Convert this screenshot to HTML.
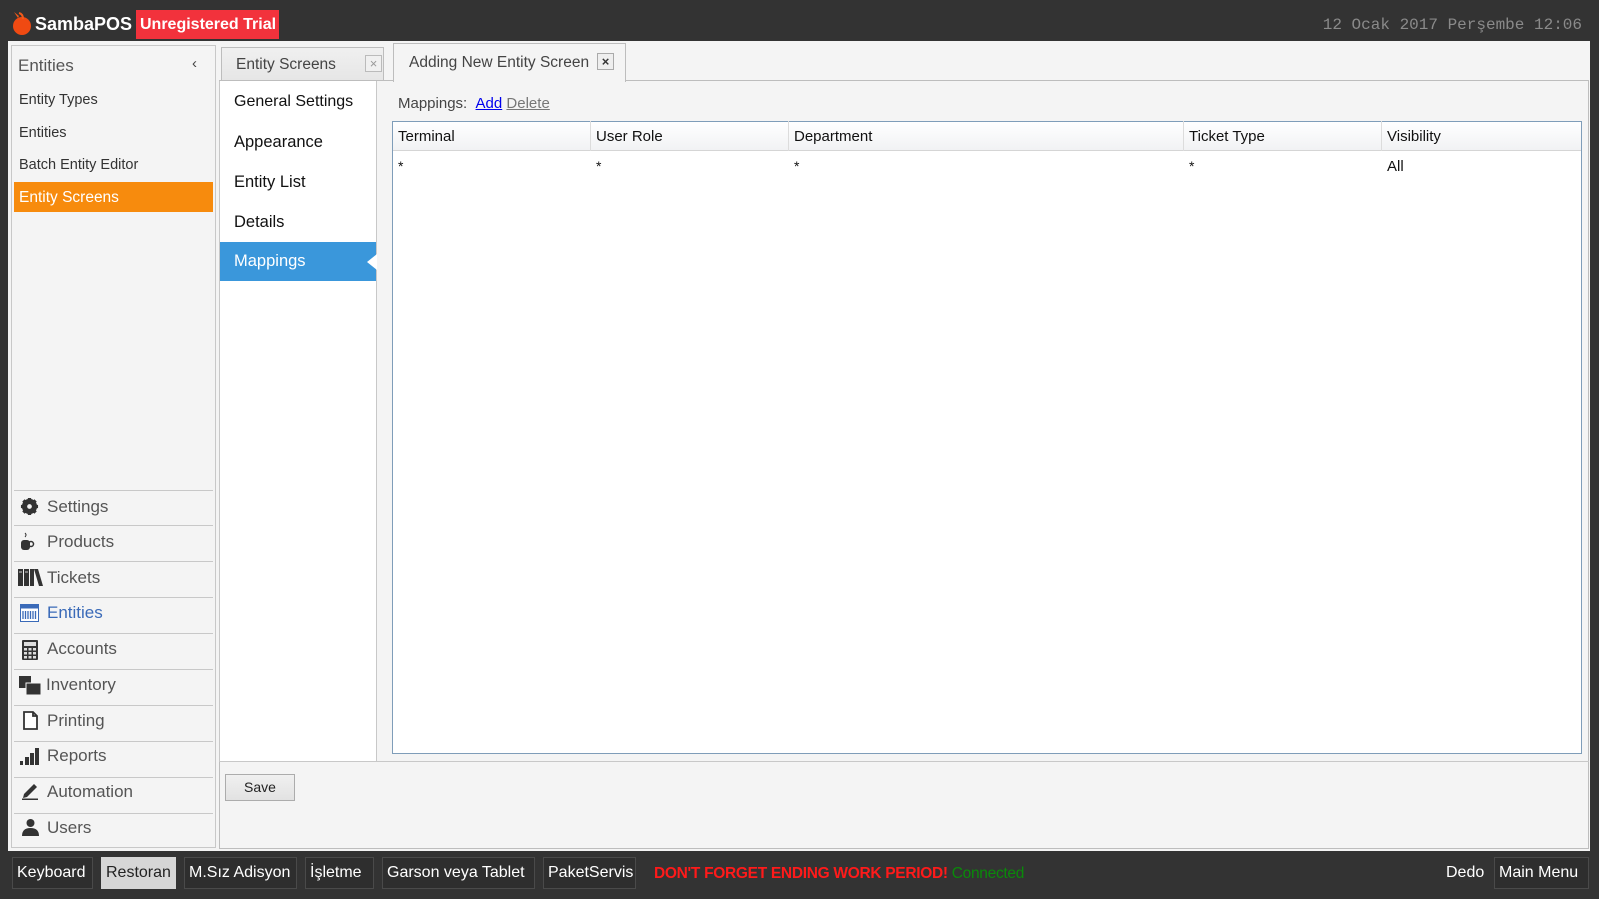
<!DOCTYPE html>
<html><head><meta charset="utf-8"><style>
*{box-sizing:border-box;margin:0;padding:0}
body{width:1599px;height:899px;background:#333333;font-family:"Liberation Sans",sans-serif;position:relative;overflow:hidden}
.a{position:absolute;white-space:nowrap}
.side{font-size:14.5px;color:#333}
.nav{font-size:17px;color:#555;left:47px}
.navsep{position:absolute;left:14px;width:199px;height:1px;background:#c8c8c8}
.ic{position:absolute;left:20px}
.mi{font-size:16.5px;color:#111;left:234px}
.bb{position:absolute;top:857px;height:32px;border:1px solid #4a4a4a;color:#fff;font-size:16px;line-height:30px;padding:0 4px;white-space:nowrap;background:#2e2e2e}
.col{position:absolute;top:121px;width:1px;height:30px;background:#dcdcdc}
.h{font-size:15px;color:#111;top:128px}
.c{font-size:14px;color:#111;top:158px}
</style></head><body>
<svg class="a" style="left:10px;top:10px" width="24" height="26" viewBox="0 0 24 26"><path d="M4 2 L9 6 L8 8 Z" fill="#f25a1a"/><ellipse cx="12" cy="16" rx="9" ry="9" fill="#f04a12"/><path d="M9 3 q4 1 4 6" stroke="#f25a1a" stroke-width="2" fill="none"/></svg>
<div class="a" style="left:35px;top:14px;font-size:18px;font-weight:bold;color:#fff">SambaPOS</div>
<div class="a" style="left:136px;top:10px;height:29px;width:143px;background:#f2323c;color:#fff;font-weight:bold;font-size:16px;line-height:29px;padding-left:4px">Unregistered Trial</div>
<div class="a" style="right:17px;top:16px;font-family:'Liberation Mono',monospace;font-size:16px;color:#8a8a8a">12 Ocak 2017 Perşembe 12:06</div>
<div class="a" style="left:8px;top:41px;width:1582px;height:810px;background:#f4f4f4"></div>
<div class="a" style="left:11px;top:45px;width:205px;height:803px;border:1px solid #c8c8c8;background:#f4f4f4"></div>
<div class="a side" style="left:18px;top:56px;font-size:17px;color:#555">Entities</div>
<div class="a" style="left:192px;top:55px;font-size:15px;color:#444">‹</div>
<div class="a side" style="left:19px;top:92px">Entity Types</div>
<div class="a side" style="left:19px;top:125px">Entities</div>
<div class="a side" style="left:19px;top:157px">Batch Entity Editor</div>
<div class="a" style="left:14px;top:182px;width:199px;height:30px;background:#f78b0d"></div>
<div class="a side" style="left:19px;top:189px;color:#fff;font-size:15.5px">Entity Screens</div>
<div class="navsep" style="top:490px"></div><div class="navsep" style="top:525px"></div><div class="navsep" style="top:561px"></div><div class="navsep" style="top:597px"></div><div class="navsep" style="top:633px"></div><div class="navsep" style="top:669px"></div><div class="navsep" style="top:705px"></div><div class="navsep" style="top:741px"></div><div class="navsep" style="top:777px"></div><div class="navsep" style="top:813px"></div>
<svg class="ic" style="top:497px" width="19" height="19" viewBox="0 0 20 20"><circle cx="10" cy="10" r="6" fill="none" stroke="#333" stroke-width="4"/><g stroke="#333" stroke-width="3.5"><path d="M10 1v18M1 10h18M3.6 3.6l12.8 12.8M16.4 3.6L3.6 16.4"/></g><circle cx="10" cy="10" r="2.5" fill="#f4f4f4"/></svg>
<div class="a nav" style="top:497px">Settings</div>
<svg class="ic" style="top:532px" width="16" height="20" viewBox="0 0 16 20"><path d="M5 1q2 2 0 4" stroke="#333" fill="none"/><rect x="1" y="8" width="9" height="10" rx="3" fill="#333"/><circle cx="11" cy="12" r="2.5" fill="none" stroke="#333" stroke-width="1.5"/></svg>
<div class="a nav" style="top:532px">Products</div>
<svg class="a" style="left:17px;top:568px" width="26" height="19" viewBox="0 0 26 19"><rect x="1" y="1" width="5" height="17" fill="#333"/><rect x="7" y="1" width="5" height="17" fill="#333"/><rect x="13" y="1" width="4" height="17" fill="#333"/><path d="M17 1l4 0 5 17-4 0z" fill="#333"/><path d="M2 4h3M8 4h3" stroke="#ccc"/></svg>
<div class="a nav" style="top:568px">Tickets</div>
<svg class="ic" style="top:604px" width="19" height="18" viewBox="0 0 19 18"><rect x="0.5" y="0.5" width="18" height="17" fill="#fff" stroke="#3a6ab8"/><rect x="0.5" y="0.5" width="18" height="4" fill="#3a6ab8"/><path d="M3 7v8M5.5 7v8M8 7v8M10.5 7v8M13 7v8M15.5 7v8" stroke="#3a6ab8" stroke-width="1.3"/></svg>
<div class="a nav" style="top:603px;color:#3a6ab8">Entities</div>
<svg class="ic" style="top:640px;left:22px" width="16" height="20" viewBox="0 0 16 20"><rect width="16" height="20" rx="1" fill="#333"/><rect x="2" y="2" width="12" height="4" fill="#ddd"/><g fill="#ddd"><rect x="2" y="8" width="3" height="2.5"/><rect x="6.5" y="8" width="3" height="2.5"/><rect x="11" y="8" width="3" height="2.5"/><rect x="2" y="12" width="3" height="2.5"/><rect x="6.5" y="12" width="3" height="2.5"/><rect x="11" y="12" width="3" height="2.5"/><rect x="2" y="16" width="3" height="2.5"/><rect x="6.5" y="16" width="3" height="2.5"/><rect x="11" y="16" width="3" height="2.5"/></g></svg>
<div class="a nav" style="top:639px">Accounts</div>
<svg class="ic" style="top:676px;left:19px" width="22" height="19" viewBox="0 0 22 19"><rect width="12" height="12" fill="#333"/><rect x="7" y="7" width="15" height="12" fill="#333" stroke="#f4f4f4"/></svg>
<div class="a nav" style="top:675px;left:46px">Inventory</div>
<svg class="ic" style="top:711px;left:23px" width="15" height="19" viewBox="0 0 15 19"><path d="M1 1h9l4 4v13H1z" fill="#fff" stroke="#333" stroke-width="1.8"/><path d="M10 1v4h4" fill="none" stroke="#333" stroke-width="1.8"/></svg>
<div class="a nav" style="top:711px">Printing</div>
<svg class="ic" style="top:748px" width="20" height="17" viewBox="0 0 20 17"><rect x="0" y="13" width="3" height="4" fill="#333"/><rect x="5" y="9" width="4" height="8" fill="#333"/><rect x="10" y="5" width="4" height="12" fill="#333"/><rect x="15" y="0" width="4" height="17" fill="#333"/></svg>
<div class="a nav" style="top:746px">Reports</div>
<svg class="ic" style="top:782px;left:21px" width="18" height="18" viewBox="0 0 18 18"><path d="M3 12L13 2l3 3L6 15l-4 1z" fill="#333"/><rect x="1" y="16.5" width="16" height="1.5" fill="#333"/></svg>
<div class="a nav" style="top:782px">Automation</div>
<svg class="ic" style="top:818px;left:22px" width="17" height="18" viewBox="0 0 17 18"><circle cx="8.5" cy="5" r="4" fill="#333"/><path d="M0 18q0-8 8.5-8t8.5 8z" fill="#333"/></svg>
<div class="a nav" style="top:818px">Users</div>
<div class="a" style="left:221px;top:47px;width:163px;height:34px;border:1px solid #bdbdbd;background:linear-gradient(#f0f0f0,#e6e6e6)"></div>
<div class="a" style="left:236px;top:56px;font-size:15.5px;color:#444">Entity Screens</div>
<div class="a" style="left:365px;top:55px;width:17px;height:17px;border:1px solid #bbb;color:#999;font-size:13px;line-height:15px;text-align:center;background:#f0f0f0">×</div>
<div class="a" style="left:219px;top:80px;width:1370px;height:769px;border:1px solid #bdbdbd;background:#f4f4f4"></div>
<div class="a" style="left:393px;top:43px;width:233px;height:39px;border:1px solid #bdbdbd;border-bottom:none;background:#f4f4f4"></div>
<div class="a" style="left:409px;top:54px;font-size:15.5px;color:#444">Adding New Entity Screen</div>
<div class="a" style="left:597px;top:53px;width:17px;height:17px;border:1px solid #aaa;color:#333;font-size:13px;font-weight:bold;line-height:15px;text-align:center;background:#eee">×</div>
<div class="a" style="left:219px;top:81px;width:158px;height:681px;background:#fff;border-right:1px solid #c8c8c8;border-left:1px solid #c8c8c8"></div>
<div class="a mi" style="top:93px;font-size:16px">General Settings</div>
<div class="a mi" style="top:133px">Appearance</div>
<div class="a mi" style="top:173px">Entity List</div>
<div class="a mi" style="top:213px">Details</div>
<div class="a" style="left:220px;top:242px;width:156px;height:39px;background:#3a97db"></div>
<div class="a" style="left:367px;top:254px;width:0;height:0;border-top:8px solid transparent;border-bottom:8px solid transparent;border-right:10px solid #fff"></div>
<div class="a mi" style="top:252px;color:#fff">Mappings</div>
<div class="a" style="left:219px;top:761px;width:1370px;height:1px;background:#c8c8c8"></div>
<div class="a" style="left:225px;top:774px;width:70px;height:27px;border:1px solid #acacac;background:linear-gradient(#f0f0f0,#e2e2e2);font-size:14px;text-align:center;line-height:25px;color:#222">Save</div>
<div class="a" style="left:398px;top:95px;font-size:15px;color:#444">Mappings: &nbsp;<span style="color:#0000ee;text-decoration:underline">Add</span> <span style="color:#777;text-decoration:underline">Delete</span></div>
<div class="a" style="left:392px;top:121px;width:1190px;height:633px;border:1px solid #7f9db9;background:#fff"></div>
<div class="a" style="left:393px;top:122px;width:1188px;height:29px;background:linear-gradient(#fff,#f1f2f4);border-bottom:1px solid #d5d5d5"></div>
<div class="col" style="left:590px"></div><div class="col" style="left:788px"></div><div class="col" style="left:1183px"></div><div class="col" style="left:1381px"></div>
<div class="a h" style="left:398px">Terminal</div><div class="a h" style="left:596px">User Role</div><div class="a h" style="left:794px">Department</div><div class="a h" style="left:1189px">Ticket Type</div><div class="a h" style="left:1387px">Visibility</div>
<div class="a c" style="left:398px">*</div><div class="a c" style="left:596px">*</div><div class="a c" style="left:794px">*</div><div class="a c" style="left:1189px">*</div><div class="a c" style="left:1387px;font-size:15px">All</div>
<div class="bb" style="left:12px;width:81px">Keyboard</div>
<div class="bb" style="left:101px;width:75px;background:#d6d6d6;color:#222;border-color:#d6d6d6">Restoran</div>
<div class="bb" style="left:184px;width:113px">M.Sız Adisyon</div>
<div class="bb" style="left:305px;width:69px">İşletme</div>
<div class="bb" style="left:382px;width:153px">Garson veya Tablet</div>
<div class="bb" style="left:543px;width:93px">PaketServis</div>
<div class="a" style="left:654px;top:865px;font-size:15.5px;font-weight:bold;color:#ff1a1a;letter-spacing:-0.3px">DON'T FORGET ENDING WORK PERIOD! <span style="color:#0a8a0a;font-weight:normal">Connected</span></div>
<div class="a" style="left:1446px;top:864px;font-size:16px;color:#fff">Dedo</div>
<div class="bb" style="left:1494px;width:95px">Main Menu</div>
</body></html>
